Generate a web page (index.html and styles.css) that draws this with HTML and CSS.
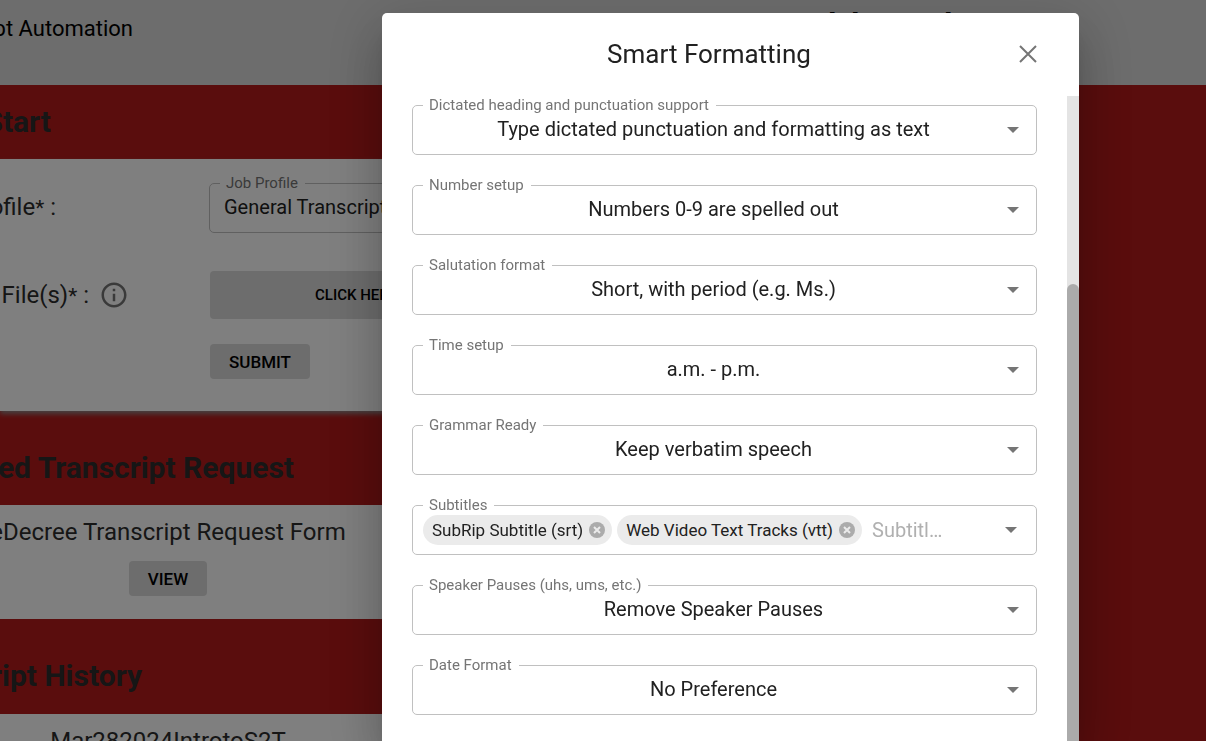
FILE: index.html
```html
<!DOCTYPE html>
<html lang="en">
<head>
<meta charset="utf-8">
<title>Smart Formatting</title>
<link rel="stylesheet" href="styles.css">
</head>
<body>
<div class="page">
  <header class="topbar">
    <p class="app-name">pt Automation</p>
    <p class="brand"><span>l</span><span>l</span><span>l</span></p>
  </header>
  <main class="main">
    <h2 class="band band-start"><span class="band-text">Start</span></h2>
    <section class="panel panel-form">
      <div class="row row-profile">
        <label class="row-name name-profile" for="profile"><span>ofile<span class="star">*</span> :</span></label>
        <fieldset class="field field-profile">
          <legend class="legend">Job Profile</legend>
          <select class="select select-left" id="profile"><option>General Transcription</option></select>
        </fieldset>
      </div>
      <div class="row row-file">
        <div class="row-name name-file"><span>File(s)<span class="star">*</span> :</span><svg class="info" viewBox="0 0 24 24" aria-hidden="true"><path d="M11 7h2v2h-2zm0 4h2v6h-2zm1-9C6.480 2 2 6.480 2 12s4.480 10 10 10 10-4.480 10-10S17.520 2 12 2zm0 18c-4.410 0-8-3.590-8-8s3.590-8 8-8 8 3.590 8 8-3.590 8-8 8z"/></svg></div>
        <button class="btn btn-pick" type="button">CLICK HERE</button>
      </div>
      <div class="row row-submit">
        <button class="btn" type="button">SUBMIT</button>
      </div>
    </section>
    <h2 class="band band-request"><span class="band-text">ed Transcript Request</span></h2>
    <section class="panel panel-request">
      <div class="centered">
        <p class="line">eDecree Transcript Request Form</p>
        <button class="btn" type="button">VIEW</button>
      </div>
    </section>
    <h2 class="band band-history"><span class="band-text">ript History</span></h2>
    <section class="panel panel-history">
      <div class="centered"><p class="line">Mar282024IntrotoS2T</p></div>
    </section>
  </main>
</div>

<div class="backdrop">
  <div class="dialog" role="dialog" aria-modal="true" aria-labelledby="dialog-title">
    <div class="dialog-head">
      <h1 class="dialog-title" id="dialog-title">Smart Formatting</h1>
      <button class="close" type="button" aria-label="Close">
        <svg class="close-icon" viewBox="0 0 20 20" aria-hidden="true"><path d="M2 2l16 16M18 2l-16 16"/></svg>
      </button>
    </div>
    <div class="dialog-body">
      <form class="fields">
        <fieldset class="field">
          <legend class="legend"><label for="f1">Dictated heading and punctuation support</label></legend>
          <select class="select" id="f1"><option>Type dictated punctuation and formatting as text</option></select>
          <span class="arrow"></span>
        </fieldset>
        <fieldset class="field">
          <legend class="legend"><label for="f2">Number setup</label></legend>
          <select class="select" id="f2"><option>Numbers 0-9 are spelled out</option></select>
          <span class="arrow"></span>
        </fieldset>
        <fieldset class="field">
          <legend class="legend"><label for="f3">Salutation format</label></legend>
          <select class="select" id="f3"><option>Short, with period (e.g. Ms.)</option></select>
          <span class="arrow"></span>
        </fieldset>
        <fieldset class="field">
          <legend class="legend"><label for="f4">Time setup</label></legend>
          <select class="select" id="f4"><option>a.m. - p.m.</option></select>
          <span class="arrow"></span>
        </fieldset>
        <fieldset class="field">
          <legend class="legend"><label for="f5">Grammar Ready</label></legend>
          <select class="select" id="f5"><option>Keep verbatim speech</option></select>
          <span class="arrow"></span>
        </fieldset>
        <fieldset class="field">
          <legend class="legend"><label for="f6">Subtitles</label></legend>
          <div class="chips">
            <span class="chip">SubRip Subtitle (srt)
              <button class="chip-x" type="button" aria-label="Remove SubRip Subtitle"><svg class="chip-icon" viewBox="0 0 16 16" aria-hidden="true"><circle cx="8" cy="8" r="8"/><path d="M5 5l6 6M11 5l-6 6"/></svg></button>
            </span>
            <span class="chip">Web Video Text Tracks (vtt)
              <button class="chip-x" type="button" aria-label="Remove Web Video Text Tracks"><svg class="chip-icon" viewBox="0 0 16 16" aria-hidden="true"><circle cx="8" cy="8" r="8"/><path d="M5 5l6 6M11 5l-6 6"/></svg></button>
            </span>
            <input class="chip-input" id="f6" type="text" placeholder="Subtitles">
          </div>
          <span class="arrow arrow-combo"></span>
        </fieldset>
        <fieldset class="field">
          <legend class="legend"><label for="f7">Speaker Pauses (uhs, ums, etc.)</label></legend>
          <select class="select" id="f7"><option>Remove Speaker Pauses</option></select>
          <span class="arrow"></span>
        </fieldset>
        <fieldset class="field">
          <legend class="legend"><label for="f8">Date Format</label></legend>
          <select class="select" id="f8"><option>No Preference</option></select>
          <span class="arrow"></span>
        </fieldset>
      </form>
      <div class="track"><div class="thumb"></div></div>
    </div>
  </div>
</div>
</body>
</html>
```
FILE: styles.css
```css
* { box-sizing: border-box; }
html, body { height: 100%; }
body {
  margin: 0;
  overflow: hidden;
  font-family: Roboto, "Liberation Sans", sans-serif;
  color: #2d2d2d;
}
h1, h2, p { margin: 0; font-weight: 400; }
.page { height: 100vh; overflow: hidden; background: #b41a1a; }

.topbar {
  display: flex;
  justify-content: space-between;
  height: 85px;
  padding: 12px 253px 0 0;
  background: #dadada;
  color: #000;
}
.app-name {
  display: flex;
  justify-content: flex-end;
  width: 133px;
  white-space: nowrap;
  font-size: 22px;
  line-height: 34px;
}
.brand {
  display: grid;
  align-content: start;
  grid-template-columns: 23px 93px 9px;
  font-size: 32px;
  line-height: 24px;
  font-weight: 700;
}

.main { width: 83%; }
.band {
  display: flex;
  align-items: center;
  background: #b41a1a;
  color: #2d2d2d;
  font-size: 30px;
  line-height: 36px;
  font-weight: 700;
  white-space: nowrap;
}
.band-text { display: flex; justify-content: flex-end; }
.band-start { height: 74px; }
.band-start .band-text { width: 51px; }
.band-request { height: 94px; padding-top: 20px; }
.band-request .band-text { width: 294px; }
.band-history { height: 95px; padding-top: 18px; }
.band-history .band-text { width: 142px; }

.panel { background: #fff; }
.panel-form { position: relative; height: 252px; padding-top: 15px; box-shadow: 0 3px 5px #8c8484; }
.panel-request { height: 114px; padding-top: 9px; }
.panel-history { height: 114px; padding-top: 9px; }

.row { display: flex; align-items: center; }
.row-file { margin-top: 38px; }
.row-submit { margin-top: 25px; padding-left: 210px; }
.row-name {
  display: flex;
  align-items: center;
  justify-content: flex-end;
  font-size: 24px;
  line-height: 32px;
  white-space: nowrap;
}
.name-profile { width: 56px; margin-right: 153px; padding-top: 8px; }
.name-file { width: 129px; margin-right: 81px; }
.star { font-size: 21px; }
.info { width: 30px; height: 30px; margin-left: 10px; fill: #757575; }

.btn {
  height: 35px;
  padding: 0 19px;
  border: 0;
  border-radius: 4px;
  background: #dadada;
  color: #000;
  font: 500 17px/24px Roboto, "Liberation Sans", sans-serif;
}
.btn-pick { flex: 1; height: 48px; padding: 0 105px; font-size: 15px; text-align: left; }
.centered {
  display: flex;
  flex-direction: column;
  align-items: center;
  gap: 11px;
  width: 336px;
}
.line { white-space: nowrap; font-size: 24px; line-height: 36px; }

.backdrop {
  position: fixed;
  inset: 0;
  display: flex;
  padding: 13px 127px 0 382px;
  background: rgba(0, 0, 0, .5);
}
.dialog {
  display: flex;
  flex: 1;
  flex-direction: column;
  min-width: 0;
  border-radius: 5px 5px 0 0;
  background: #fff;
  color: #212121;
  box-shadow: 0 14px 19px -9px rgba(0, 0, 0, .2), 0 30px 48px 4px rgba(0, 0, 0, .14), 0 11px 58px 10px rgba(0, 0, 0, .12);
}
.dialog-head {
  display: flex;
  align-items: center;
  height: 83px;
  padding: 0 41px 2px 18px;
}
.dialog-title { flex: 1; text-align: center; font-size: 26px; line-height: 32px; }
.close { display: flex; padding: 0; border: 0; background: none; }
.close-icon { width: 20px; height: 20px; fill: none; stroke: #757575; stroke-width: 2; }
.dialog-body { display: flex; flex: 1; min-height: 0; overflow: hidden; }
.fields {
  display: flex;
  flex: 1;
  flex-direction: column;
  gap: 21px;
  min-width: 0;
  padding: 0 30px;
}
.track { width: 12px; background: #e4e4e4; }
.thumb { height: 100%; margin-top: 188px; border-radius: 6px; background: #ababab; }

.field {
  position: relative;
  flex: none;
  height: 59px;
  min-width: 0;
  margin: 0;
  padding: 0 0 0 10px;
  border: 1px solid #c0c0c0;
  border-radius: 5px;
}
.legend {
  height: 18px;
  padding: 0 7px 0 6px;
  color: #757575;
  font-size: 15px;
  line-height: 18px;
  white-space: nowrap;
}
.select {
  display: block;
  width: 100%;
  height: 30px;
  padding: 0 40px 0 8px;
  border: 0;
  background: transparent;
  color: #212121;
  appearance: none;
  text-align: center;
  text-align-last: center;
  font: 400 20px/30px Roboto, "Liberation Sans", sans-serif;
}
.select-left { padding-left: 4px; text-align: left; text-align-last: left; }
.field-profile { flex: 1; }
.arrow {
  position: absolute;
  right: 17px;
  top: 13px;
  border: 6px solid transparent;
  border-top-color: #757575;
  border-bottom: 0;
}
.arrow-combo { right: 19px; }

.chips { display: flex; align-items: center; gap: 5px; height: 32px; margin-right: 89px; }
.chip {
  display: flex;
  flex: none;
  align-items: center;
  gap: 6px;
  height: 30px;
  padding: 0 7px 0 9px;
  border-radius: 15px;
  background: #ebebeb;
  font-size: 17px;
  line-height: 24px;
}
.chip-x { display: flex; padding: 0; border: 0; background: none; }
.chip-icon { width: 16px; height: 16px; fill: #ababab; stroke: #ebebeb; stroke-width: 2; }
.chip-icon circle { stroke: none; }
.chip-input {
  flex: 1;
  min-width: 0;
  height: 30px;
  padding: 0 0 0 5px;
  border: 0;
  background: transparent;
  text-overflow: ellipsis;
  font: 400 20px/30px Roboto, "Liberation Sans", sans-serif;
}
.chip-input::placeholder { color: #b0b0b0; }
```
